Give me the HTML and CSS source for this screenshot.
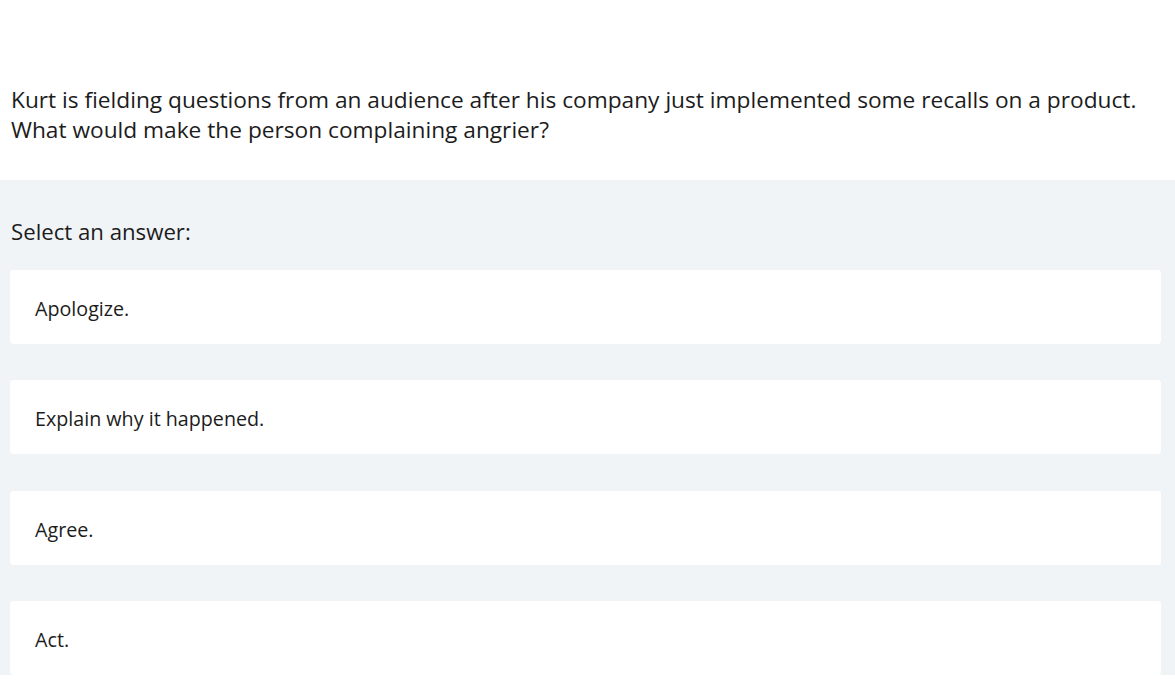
FILE: index.html
```html
<!DOCTYPE html>
<html>
<head>
<meta charset="utf-8">
<link rel="stylesheet" href="styles.css">
</head>
<body>
<div class="question">
  <p class="question-text">Kurt is fielding questions from an audience after his company just implemented some recalls on a product. What would make the person complaining angrier?</p>
</div>
<div class="answers">
  <h2 class="answers-title">Select an answer:</h2>
  <div class="answer">Apologize.</div>
  <div class="answer">Explain why it happened.</div>
  <div class="answer">Agree.</div>
  <div class="answer">Act.</div>
</div>
</body>
</html>
```
FILE: styles.css
```css
html, body {
  margin: 0;
  padding: 0;
  background: #ffffff;
  font-family: "Open Sans", "Noto Sans", sans-serif;
  color: #1c1c1c;
}
.question {
  padding: 85px 14px 0 11px;
  height: 95px;
}
.question-text {
  margin: 0;
  font-size: 22.7px;
  line-height: 30px;
  max-width: 1145px;
}
.answers {
  background: #f1f4f7;
  padding: 37px 14px 0 10px;
}
.answers-title {
  margin: 0 0 23px 1px;
  font-size: 22.2px;
  font-weight: 400;
  line-height: 30px;
}
.answer {
  background: #ffffff;
  border-radius: 4px;
  height: 74px;
  box-sizing: border-box;
  display: flex;
  align-items: center;
  padding: 3px 0 0 25px;
  font-size: 19.7px;
  margin-bottom: 36.33px;
}
```
